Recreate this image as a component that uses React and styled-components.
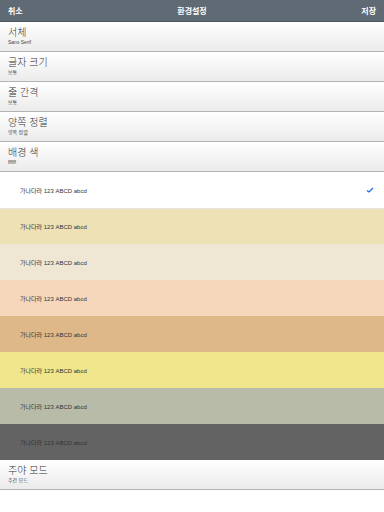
import React from "react";
import styled, { createGlobalStyle } from "styled-components";

const GlobalStyle = createGlobalStyle`
  html, body {
    margin: 0;
    padding: 0;
    background: #ffffff;
    font-family: "Liberation Sans", "Noto Sans CJK KR", sans-serif;
  }
`;

const Page = styled.div`
  width: 384px;
  height: 512px;
  display: flex;
  flex-direction: column;
  background: #ffffff;
  overflow: hidden;
`;

const Header = styled.div`
  height: 21px;
  flex: 0 0 21px;
  display: grid;
  grid-template-columns: 1fr auto 1fr;
  align-items: center;
  padding: 0 8px;
  background: #606a74;
  border-bottom: 1px solid #4e565e;
  color: #ffffff;
  font-size: 8px;
  font-weight: bold;
`;

const HeaderButton = styled.span`
  justify-self: ${(p) => (p.right ? "end" : "start")};
`;

const Row = styled.div`
  height: 29px;
  flex: 0 0 29px;
  display: flex;
  flex-direction: column;
  justify-content: center;
  padding: 0 8px;
  background: linear-gradient(#ffffff, #ebebeb);
  border-bottom: 1px solid #b3b3b3;
`;

const Title = styled.div`
  font-size: 10px;
  line-height: 12px;
  font-weight: 300;
  color: #333;
`;

const Sub = styled.div`
  font-size: 5px;
  line-height: 7px;
  color: #444;
`;

const Swatch = styled.div`
  height: 36px;
  flex: 0 0 36px;
  box-sizing: border-box;
  display: flex;
  align-items: center;
  justify-content: space-between;
  padding: 0 10px 0 20px;
  background: ${(p) => p.bg};
  border-top: ${(p) => (p.line ? "1px solid #e4e4e4" : "none")};
`;

const Sample = styled.span`
  font-size: 6px;
  color: #333;
`;

const Check = () => (
  <svg width="8" height="6" viewBox="0 0 8 6">
    <path d="M1 3.5 L3 5 L7 1" fill="none" stroke="#1a6fe6" strokeWidth="1.3" />
  </svg>
);

const settings = [
  { title: "서체", sub: "Sans Serif" },
  { title: "글자 크기", sub: "보통" },
  { title: "줄 간격", sub: "보통" },
  { title: "양쪽 정렬", sub: "양쪽 정렬" },
  { title: "배경 색", sub: "ffffff" },
];

const colors = [
  "#ffffff",
  "#ede1b5",
  "#efe6d3",
  "#f6d7bb",
  "#dfb88a",
  "#f0e68b",
  "#b8bba7",
  "#636363",
];

export default function App() {
  return (
    <Page>
      <GlobalStyle />
      <Header>
        <HeaderButton>취소</HeaderButton>
        <span>환경설정</span>
        <HeaderButton right>저장</HeaderButton>
      </Header>
      {settings.map((s) => (
        <Row key={s.title}>
          <Title>{s.title}</Title>
          <Sub>{s.sub}</Sub>
        </Row>
      ))}
      {colors.map((c, i) => (
        <Swatch key={c} bg={c} line={i === 1}>
          <Sample>가나다라 123 ABCD abcd</Sample>
          {i === 0 && <Check />}
        </Swatch>
      ))}
      <Row>
        <Title>주야 모드</Title>
        <Sub>주간 모드</Sub>
      </Row>
    </Page>
  );
}
